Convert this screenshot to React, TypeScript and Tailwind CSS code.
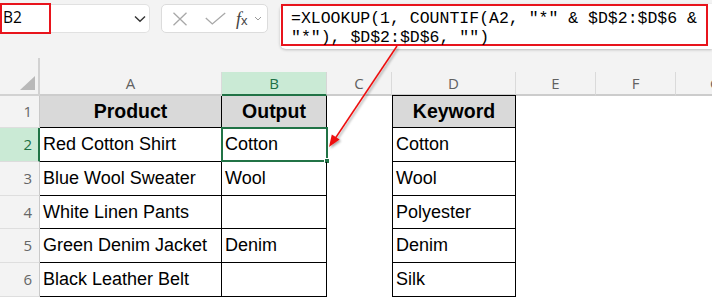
import React from "react";

type Row = { h: string; a: string; b: string; d: string };

const rows: Row[] = [
  { h: "h-[32px]", a: "Product", b: "Output", d: "Keyword" },
  { h: "h-[34px]", a: "Red Cotton Shirt", b: "Cotton", d: "Cotton" },
  { h: "h-[34px]", a: "Blue Wool Sweater", b: "Wool", d: "Wool" },
  { h: "h-[33px]", a: "White Linen Pants", b: "", d: "Polyester" },
  { h: "h-[34px]", a: "Green Denim Jacket", b: "Denim", d: "Denim" },
  { h: "h-[34px]", a: "Black Leather Belt", b: "", d: "Silk" },
];

const colHeaders = [
  { l: "A", w: "w-[182px]" },
  { l: "B", w: "w-[105px]", sel: true },
  { l: "C", w: "w-[65px]" },
  { l: "D", w: "w-[124px]" },
  { l: "E", w: "w-[80px]" },
  { l: "F", w: "w-[80px]" },
  { l: "G", w: "w-[80px]" },
];

export default function App() {
  return (
    <div className="relative h-[297px] w-[712px] overflow-hidden bg-white font-['Liberation_Sans',Arial,sans-serif]">
      {/* Top bar */}
      <div className="flex h-[58px] items-start bg-[#f3f3f3] pt-[4px]">
        {/* Name box */}
        <div className="flex h-[29px] w-[150px] shrink-0 items-center rounded-r-[5px] border border-l-0 border-[#e1e1e1] bg-white">
          <div className="-mt-[1px] flex h-[31px] w-[51px] items-center border-2 border-[#e8141c] pl-[1px] font-['Open_Sans',sans-serif] text-[15.5px] text-black">
            B2
          </div>
          <div className="flex-1" />
          <svg className="mr-[3px]" width="12" height="8" viewBox="0 0 12 8">
            <path d="M1 1.5 L6 6.3 L11 1.5" fill="none" stroke="#333" strokeWidth="1.4" />
          </svg>
        </div>
        {/* Buttons */}
        <div className="ml-[11px] flex h-[29px] w-[107px] shrink-0 items-center rounded-[5px] border border-[#dcdcdc] bg-white pl-[10px]">
          <svg width="16" height="14" viewBox="0 0 16 14">
            <path d="M1.5 0.8 L14.5 13.2 M14.5 0.8 L1.5 13.2" stroke="#a8a8a8" strokeWidth="1.3" fill="none" />
          </svg>
          <svg className="ml-[17px]" width="21" height="13" viewBox="0 0 21 13">
            <path d="M0.8 6 L7.3 12 L20.2 1" stroke="#a8a8a8" strokeWidth="1.3" fill="none" />
          </svg>
          <span className="ml-[10px] font-['Liberation_Serif',serif] text-[18px] italic leading-none text-[#444]">
            f<span className="text-[13px] not-italic font-['Liberation_Sans',sans-serif]">x</span>
          </span>
          <svg className="ml-[6px]" width="8" height="5" viewBox="0 0 8 5">
            <path d="M1 1 L4 4 L7 1" fill="none" stroke="#9a9a9a" strokeWidth="1" />
          </svg>
        </div>
        {/* Formula bar */}
        <div className="ml-[12px] h-[45px] flex-1 rounded-l-[6px] bg-white shadow-[0_1px_3px_rgba(0,0,0,0.22)]">
          <div className="ml-[1px] h-[42px] w-[427px] whitespace-pre border-2 border-[#e8141c] pl-[8px] pt-[3px] font-['Liberation_Mono',monospace] text-[16.5px] leading-[19px] text-black">
            <div>{'=XLOOKUP(1, COUNTIF(A2, "*" & $D$2:$D$6 &'}</div>
            <div>{'"*"), $D$2:$D$6, "")'}</div>
          </div>
        </div>
      </div>

      {/* Column headers */}
      <div className="flex h-[38px] bg-[#f3f3f3] font-['Open_Sans',sans-serif]">
        <div className="flex w-[40px] shrink-0 items-end justify-end border-b-2 border-r-2 border-[#d2d2d2] pb-[4px] pr-[3px]">
          <svg width="15" height="14" viewBox="0 0 15 14">
            <polygon points="15,0 15,14 0,14" fill="#b9b9b9" />
          </svg>
        </div>
        {colHeaders.map((c) => (
          <div key={c.l} className={`flex shrink-0 flex-col ${c.w}`}>
            <div className="flex-1" />
            {c.sel ? (
              <div className="flex h-[24px] items-center justify-center border-b-2 border-r border-b-[#217346] border-r-[#d6d6d6] bg-[#caead5] text-[15px] text-[#1e7145]">
                {c.l}
              </div>
            ) : (
              <div className="flex h-[24px] items-center justify-center border-b-2 border-r border-b-[#cccccc] border-r-[#dadada] text-[15px] text-[#616161]">
                {c.l}
              </div>
            )}
          </div>
        ))}
      </div>

      {/* Body */}
      {rows.map((r, i) => {
        const header = i === 0;
        const selected = i === 1;
        const cellText = header
          ? "justify-center bg-[#d9d9d9] text-[19.5px] font-bold"
          : "pl-[3px] text-[18px]";
        return (
          <div key={i} className={`flex ${r.h}`}>
            {selected ? (
              <div className="flex w-[40px] shrink-0 items-center justify-end border-b border-r-2 border-b-[#dcdcdc] border-r-[#217346] bg-[#caead5] pr-[6px] font-['Open_Sans',sans-serif] text-[15px] text-[#1e7145]">
                {i + 1}
              </div>
            ) : (
              <div className="flex w-[40px] shrink-0 items-center justify-end border-b border-r border-b-[#dedede] border-r-[#c9c9c9] bg-[#f3f3f3] pr-[7px] font-['Open_Sans',sans-serif] text-[15px] text-[#666]">
                {i + 1}
              </div>
            )}
            <div className={`flex w-[182px] shrink-0 items-center border-b border-r border-black text-black ${cellText}`}>
              {r.a}
            </div>
            <div className={`relative flex w-[105px] shrink-0 items-center border-b border-r border-black text-black ${cellText}`}>
              {r.b}
              {selected && (
                <>
                  <div className="absolute -left-[1px] -top-[1px] h-[35px] w-[107px] border-2 border-[#217346]" />
                  <div className="absolute -bottom-[3px] -right-[4px] h-[6px] w-[6px] border border-white bg-[#217346]" />
                </>
              )}
            </div>
            <div className="w-[65px] shrink-0" />
            <div
              className={`flex w-[124px] shrink-0 items-center border-b border-l border-r border-black text-black ${cellText} ${
                header ? "-mt-[1px] border-t" : ""
              }`}
            >
              {r.d}
            </div>
            <div className="flex-1" />
          </div>
        );
      })}

      {/* Arrow overlay */}
      <svg className="pointer-events-none absolute left-0 top-0" width="712" height="297" viewBox="0 0 712 297">
        <defs>
          <filter id="sh" x="-50%" y="-50%" width="200%" height="200%">
            <feDropShadow dx="1.5" dy="1.5" stdDeviation="1.2" floodColor="#000" floodOpacity="0.35" />
          </filter>
        </defs>
        <g filter="url(#sh)">
          <line x1="397" y1="46" x2="335.5" y2="138" stroke="#ee1111" strokeWidth="1.5" />
          <polygon points="329,147 339.6,139.6 331.8,134.4" fill="#ee1111" />
        </g>
      </svg>
    </div>
  );
}
